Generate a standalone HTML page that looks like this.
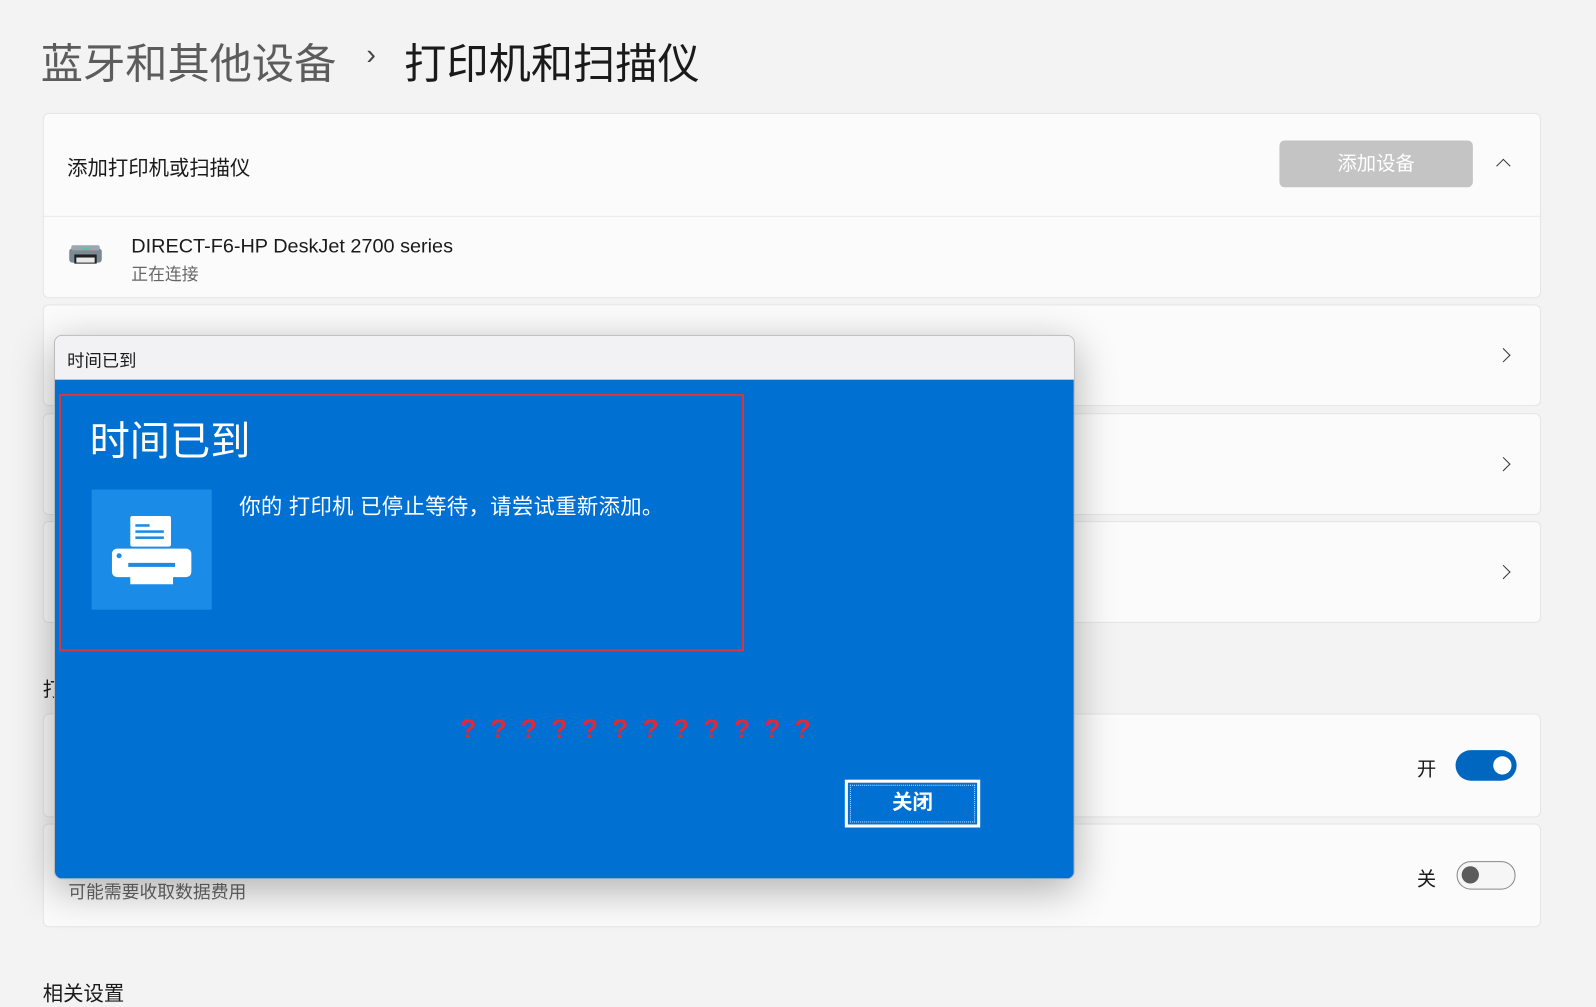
<!DOCTYPE html>
<html><head><meta charset="utf-8"><style>
html,body{margin:0;padding:0;width:1596px;height:990px;overflow:hidden;background:#f3f3f3;}
#w{position:absolute;left:0;top:0;width:1568px;height:973px;transform:scale(1.01786);transform-origin:0 0;font-family:"Liberation Sans","Noto Sans CJK SC",sans-serif;color:#1a1a1a;}
.a{position:absolute;white-space:nowrap;}
.card{position:absolute;left:42px;width:1470px;background:#fbfbfb;border:1px solid #e5e5e5;border-radius:6px;}
.chev{position:absolute;left:1472px;width:9px;height:9px;border-right:1.6px solid #333;border-top:1.6px solid #333;transform:rotate(45deg);}
</style></head><body><div id="w">
<div class="a" style="left:40px;top:29px;font-size:41.5px;color:#5c5c5c;">蓝牙和其他设备</div>
<div class="a" style="left:360px;top:38px;font-size:28px;color:#444;">›</div>
<div class="a" style="left:397px;top:29px;font-size:41.5px;color:#1a1a1a;">打印机和扫描仪</div>

<div class="card" style="top:111px;height:180px;"></div>
<div class="a" style="left:43px;top:212px;width:1470px;height:1px;background:#e8e8e8;"></div>
<div class="a" style="left:66px;top:149px;font-size:20px;">添加打印机或扫描仪</div>
<div class="a" style="left:1257px;top:138px;width:190px;height:46px;background:#c4c4c4;border-radius:5px;color:#fff;font-size:19px;text-align:center;line-height:48px;">添加设备</div>
<div class="a" style="left:1472px;top:158px;width:9px;height:9px;border-left:1.6px solid #333;border-top:1.6px solid #333;transform:rotate(45deg);"></div>
<svg class="a" style="left:67px;top:238px" width="34" height="24" viewBox="0 0 34 24"><rect x="1" y="6" width="32" height="14" rx="3" fill="#7c8a94"/><rect x="3" y="3" width="28" height="5" rx="2" fill="#9aa7b0"/><rect x="13" y="6" width="8" height="1.5" fill="#3ad29f"/><rect x="6" y="12" width="22" height="9" fill="#1d2226"/><rect x="8" y="15" width="18" height="5" fill="#e8e8e8"/></svg>
<div class="a" style="left:129px;top:231px;font-size:19.5px;">DIRECT-F6-HP DeskJet 2700 series</div>
<div class="a" style="left:129px;top:256px;font-size:16.5px;color:#666;">正在连接</div>

<div class="card" style="top:299px;height:98px;"></div><div class="chev" style="top:344px;"></div>
<div class="card" style="top:406px;height:98px;"></div><div class="chev" style="top:451px;"></div>
<div class="card" style="top:512px;height:98px;"></div><div class="chev" style="top:557px;"></div>
<div class="a" style="left:42px;top:663px;font-size:19px;">打印机首选项</div>
<div class="card" style="top:701px;height:100px;"></div>
<div class="a" style="left:1392px;top:741px;font-size:19px;">开</div>
<div class="a" style="left:1430px;top:737px;width:60px;height:30px;border-radius:15px;background:#0067c0;"></div>
<div class="a" style="left:1467px;top:743px;width:18px;height:18px;border-radius:9px;background:#fff;"></div>
<div class="card" style="top:809px;height:100px;"></div>
<div class="a" style="left:67px;top:863px;font-size:17.5px;color:#666;">可能需要收取数据费用</div>
<div class="a" style="left:1392px;top:849px;font-size:19px;">关</div>
<div class="a" style="left:1431px;top:846px;width:56px;height:26px;border-radius:15px;border:1.5px solid #888;background:#f6f6f6;"></div>
<div class="a" style="left:1436px;top:851px;width:17px;height:17px;border-radius:9px;background:#5c5c5c;"></div>
<div class="a" style="left:42px;top:960px;font-size:20px;">相关设置</div>

<div class="a" style="left:53px;top:329px;width:1003px;height:535px;border-radius:8px;overflow:hidden;box-shadow:0 10px 40px rgba(0,0,0,0.3);border:1px solid #b9b9b9;box-sizing:border-box;">
<div style="position:absolute;left:0;top:0;right:0;height:44px;background:#f2f2f5;"></div>
<div class="a" style="left:12px;top:10px;font-size:17px;">时间已到</div>
<div style="position:absolute;left:0;top:43px;right:0;bottom:0;background:#0070d3;"></div>
<div class="a" style="left:4px;top:57px;width:669px;height:249px;border:2px solid #d9363e;"></div>
<div class="a" style="left:34px;top:72px;font-size:39.5px;color:#fff;">时间已到</div>
<div class="a" style="left:36px;top:151px;width:118px;height:118px;background:#1a8ce8;"></div>
<svg class="a" style="left:54px;top:173px" width="82" height="76" viewBox="0 0 82 76"><rect x="20" y="4" width="40" height="30" rx="2" fill="#fff"/><rect x="25" y="12" width="14" height="2.5" fill="#1a8ce8"/><rect x="25" y="18" width="28" height="2.5" fill="#1a8ce8"/><rect x="25" y="24" width="28" height="2.5" fill="#1a8ce8"/><rect x="2" y="36" width="78" height="28" rx="5" fill="#fff"/><circle cx="9" cy="43" r="2.5" fill="#1a8ce8"/><rect x="18" y="50" width="46" height="4" fill="#1a8ce8"/><rect x="20" y="54" width="42" height="17" fill="#fff"/></svg>
<div class="a" style="left:181px;top:152px;font-size:21px;color:#fff;letter-spacing:0.3px;">你的 打印机 已停止等待，请尝试重新添加。</div>
<div class="a" style="left:398px;top:371px;font-family:'Liberation Sans',sans-serif;font-size:26px;font-weight:bold;color:#e0283a;letter-spacing:14px;">????????????</div>
<div class="a" style="left:776px;top:436px;width:133px;height:47px;border:3px solid #fff;box-sizing:border-box;"></div>
<div class="a" style="left:781px;top:441px;width:123px;height:37px;border:1px dotted #ddd;box-sizing:border-box;color:#fff;font-weight:bold;font-size:20px;text-align:center;line-height:35px;">关闭</div>
</div>
</div></body></html>
